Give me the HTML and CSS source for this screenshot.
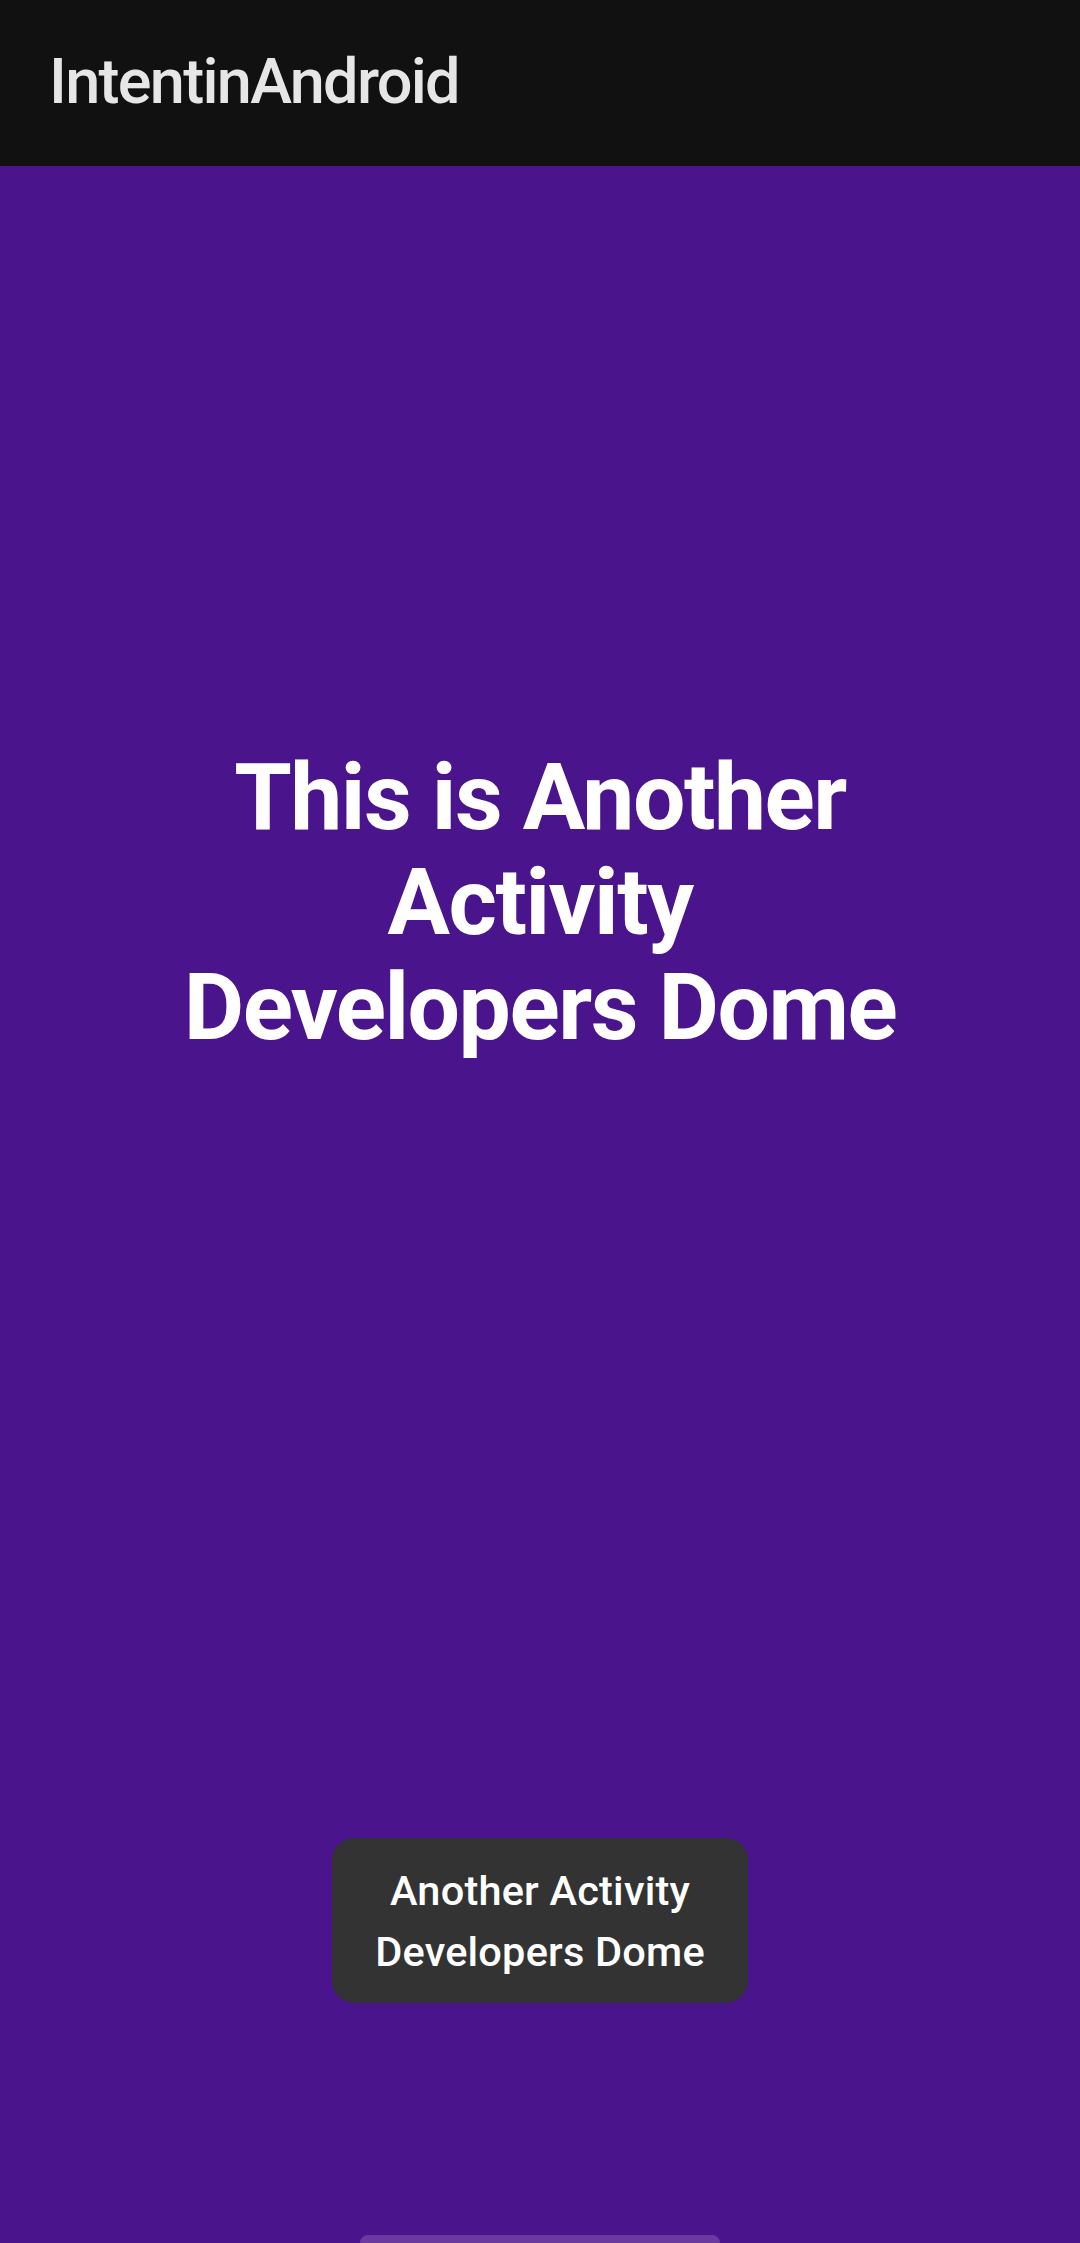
FILE: index.html
```html
<!DOCTYPE html>
<html>
<head>
<meta charset="utf-8">
<link rel="stylesheet" href="styles.css">
</head>
<body>
<div class="screen">
  <header class="toolbar"><span class="title">IntentinAndroid</span></header>
  <main class="content">
    <h1 class="heading">This is Another<br>Activity<br>Developers Dome</h1>
    <div class="toast">Another Activity<br>Developers Dome</div>
    <div class="navbar"><div class="handle"></div></div>
  </main>
</div>
</body>
</html>
```
FILE: styles.css
```css
html, body {
  margin: 0;
  padding: 0;
}
body {
  width: 1080px;
  height: 2243px;
  overflow: hidden;
  background: #4a148c;
  font-family: Roboto, "Noto Sans", sans-serif;
}
.screen {
  display: flex;
  flex-direction: column;
  height: 2243px;
}
.toolbar {
  height: 166px;
  background: #111111;
  display: flex;
  align-items: center;
  padding-left: 49px;
  box-sizing: border-box;
  flex-shrink: 0;
}
.title {
  color: #e6e6e6;
  font-size: 63px;
  font-weight: 500;
  letter-spacing: -1.7px;
  line-height: 74px;
  margin-top: -2px;
}
.content {
  flex: 1;
  background: #4a148c;
  display: flex;
  flex-direction: column;
  align-items: center;
}
.heading {
  margin: 579px 0 0 0;
  color: #ffffff;
  font-size: 93px;
  font-weight: 700;
  letter-spacing: -1.5px;
  line-height: 105px;
  text-align: center;
}
.toast {
  margin-top: 778px;
  width: 416px;
  height: 165px;
  box-sizing: border-box;
  background: #333333;
  border-radius: 22px;
  color: #ffffff;
  font-size: 41.5px;
  font-weight: 500;
  letter-spacing: 0.2px;
  line-height: 61px;
  text-align: center;
  padding-top: 22px;
}
.navbar {
  margin-top: auto;
  height: 8px;
  width: 360px;
}
.handle {
  width: 360px;
  height: 16px;
  border-radius: 8px;
  background: #6a3a9e;
}
```
